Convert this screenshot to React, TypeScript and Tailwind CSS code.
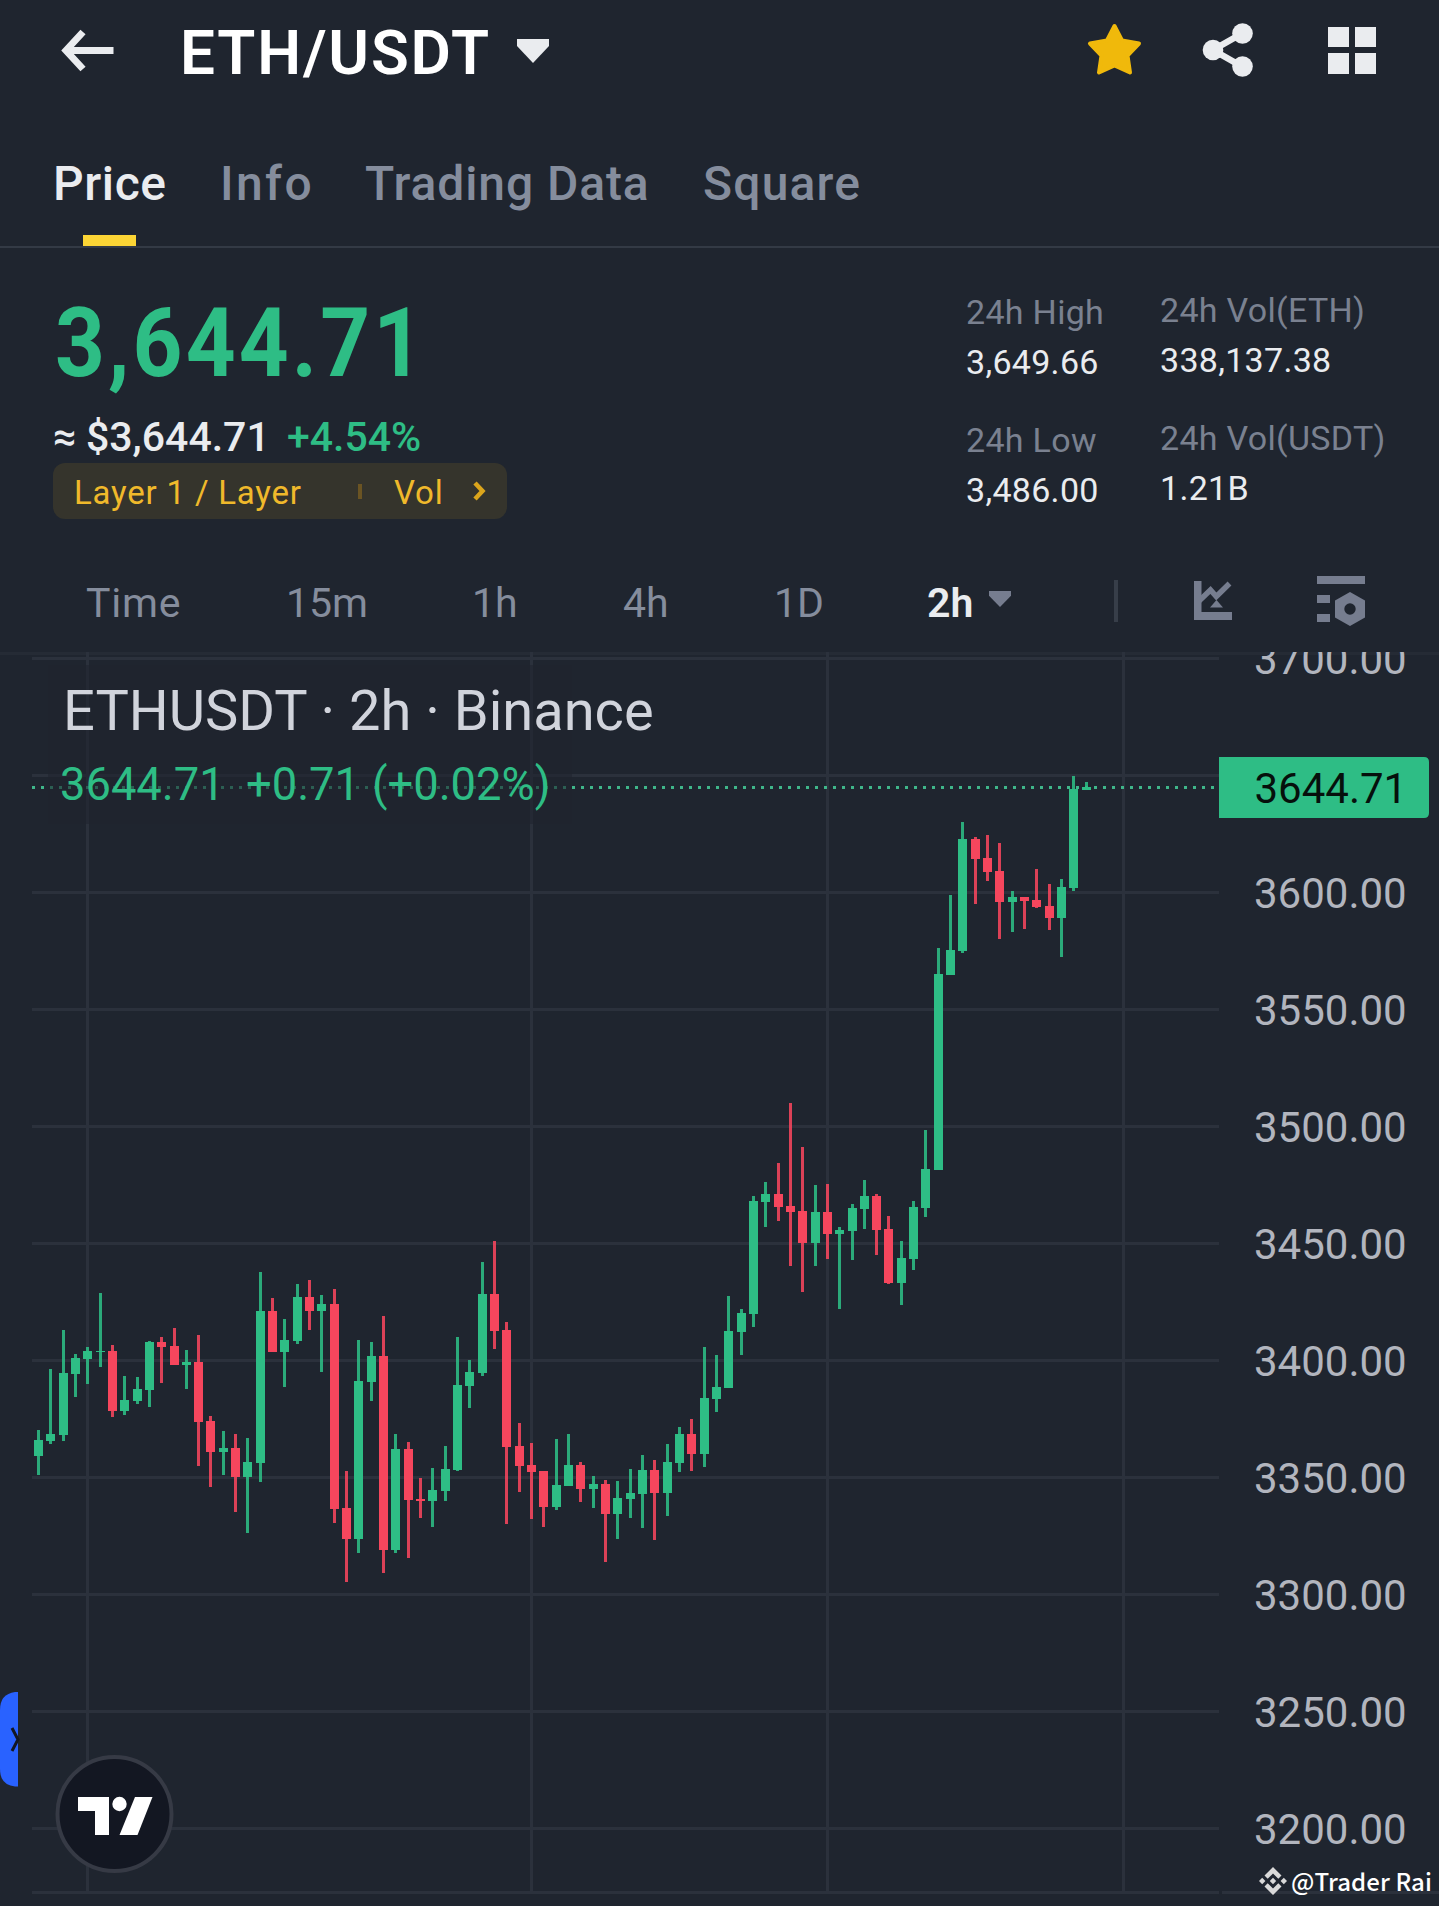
import React from "react"
import clsx from "clsx"

type Side = "up" | "down"
// side, wick top, body top, body bottom, wick bottom
type Candle = [Side, number, number, number, number]

const candles: Candle[] = [
  ["up", 1430, 1440, 1456, 1475],
  ["up", 1369, 1434, 1441, 1444],
  ["up", 1330, 1373, 1435, 1441],
  ["up", 1354, 1358, 1374, 1397],
  ["up", 1347, 1351, 1359, 1384],
  ["up", 1293, 1351, 1352, 1367],
  ["down", 1345, 1351, 1411, 1417],
  ["up", 1376, 1400, 1411, 1415],
  ["up", 1377, 1389, 1401, 1404],
  ["up", 1341, 1342, 1390, 1407],
  ["down", 1337, 1342, 1347, 1383],
  ["down", 1328, 1346, 1365, 1365],
  ["up", 1350, 1362, 1365, 1389],
  ["down", 1335, 1362, 1422, 1466],
  ["down", 1416, 1421, 1452, 1487],
  ["up", 1431, 1448, 1452, 1475],
  ["down", 1434, 1448, 1477, 1512],
  ["up", 1438, 1462, 1477, 1533],
  ["up", 1272, 1311, 1463, 1482],
  ["down", 1298, 1311, 1352, 1352],
  ["up", 1319, 1340, 1352, 1387],
  ["up", 1284, 1297, 1341, 1344],
  ["down", 1280, 1297, 1311, 1330],
  ["up", 1295, 1304, 1311, 1372],
  ["down", 1289, 1304, 1509, 1523],
  ["down", 1471, 1508, 1539, 1582],
  ["up", 1340, 1381, 1539, 1553],
  ["up", 1342, 1356, 1382, 1401],
  ["down", 1316, 1356, 1550, 1573],
  ["up", 1434, 1449, 1550, 1553],
  ["down", 1442, 1449, 1500, 1558],
  ["down", 1478, 1499, 1501, 1518],
  ["up", 1468, 1490, 1501, 1527],
  ["up", 1446, 1469, 1491, 1501],
  ["up", 1337, 1385, 1470, 1471],
  ["up", 1360, 1372, 1386, 1408],
  ["up", 1262, 1294, 1373, 1376],
  ["down", 1241, 1294, 1331, 1349],
  ["down", 1322, 1330, 1447, 1524],
  ["down", 1423, 1446, 1466, 1492],
  ["down", 1443, 1465, 1472, 1519],
  ["down", 1471, 1471, 1507, 1527],
  ["up", 1439, 1485, 1507, 1510],
  ["up", 1434, 1465, 1486, 1486],
  ["down", 1462, 1465, 1489, 1502],
  ["up", 1476, 1484, 1489, 1508],
  ["down", 1480, 1484, 1514, 1562],
  ["up", 1481, 1498, 1514, 1539],
  ["up", 1469, 1493, 1499, 1518],
  ["up", 1455, 1470, 1494, 1528],
  ["down", 1460, 1470, 1493, 1540],
  ["up", 1444, 1462, 1493, 1516],
  ["up", 1427, 1434, 1463, 1472],
  ["down", 1419, 1434, 1454, 1471],
  ["up", 1347, 1398, 1454, 1467],
  ["up", 1355, 1387, 1399, 1412],
  ["up", 1296, 1331, 1388, 1388],
  ["up", 1309, 1313, 1332, 1355],
  ["up", 1196, 1201, 1314, 1327],
  ["up", 1182, 1194, 1202, 1227],
  ["down", 1163, 1194, 1207, 1221],
  ["down", 1103, 1206, 1212, 1266],
  ["down", 1147, 1211, 1243, 1292],
  ["up", 1185, 1212, 1243, 1266],
  ["down", 1184, 1212, 1234, 1259],
  ["up", 1227, 1230, 1234, 1309],
  ["up", 1204, 1208, 1231, 1260],
  ["up", 1180, 1196, 1209, 1229],
  ["down", 1194, 1196, 1230, 1255],
  ["down", 1216, 1229, 1283, 1284],
  ["up", 1241, 1258, 1283, 1305],
  ["up", 1201, 1207, 1259, 1270],
  ["up", 1130, 1169, 1208, 1217],
  ["up", 948, 974, 1170, 1170],
  ["up", 895, 950, 975, 975],
  ["up", 822, 839, 951, 953],
  ["down", 837, 839, 859, 904],
  ["down", 835, 858, 872, 881],
  ["down", 843, 871, 902, 939],
  ["up", 891, 897, 902, 932],
  ["down", 897, 897, 901, 929],
  ["down", 869, 900, 907, 908],
  ["down", 884, 906, 918, 930],
  ["up", 879, 887, 918, 957],
  ["up", 776, 789, 888, 891],
  ["up", 782, 787, 790, 790],
]

const prices = [3700, 3650, 3600, 3550, 3500, 3450, 3400, 3350, 3300, 3250, 3200]
const verticals = [86, 530, 826, 1122]

const tabs = [
  { label: "Price", className: "ml-[53px] w-[113px] tracking-[0.6px]", active: true },
  { label: "Info", className: "ml-[54px] w-[94px] tracking-[2.4px]" },
  { label: "Trading Data", className: "ml-[51px] w-[284px] tracking-[0.9px]" },
  { label: "Square", className: "ml-[54px] w-[162px] tracking-[1.2px]" },
]

const intervals = [
  { label: "Time", className: "ml-[86px] w-[200px] tracking-[0.8px]" },
  { label: "15m", className: "w-[186px]" },
  { label: "1h", className: "w-[151px]" },
  { label: "4h", className: "w-[151px]" },
  { label: "1D", className: "w-[153px]" },
]

function BackIcon() {
  return (
    <svg className="ml-[60px] h-[44px] w-[56px] shrink-0" viewBox="0 0 56 44" fill="none">
      <path d="M23 4 L6 22.5 L23 41 M6 22.5 H53.5" stroke="#eaecef" strokeWidth="7" />
    </svg>
  )
}

function StarIcon() {
  return (
    <svg className="mb-[2px] h-[56px] w-[56px]" viewBox="0 0 56 56">
      <path
        d="M27.5 5 L35 19.5 L52 22.5 L40.5 34.5 L43 51.500 L27.5 44.5 L12 51.500 L14.5 34.500 L3 22.5 L20 19.5 Z"
        fill="#f0b90b"
        stroke="#f0b90b"
        strokeWidth="4"
        strokeLinejoin="round"
      />
    </svg>
  )
}

function ShareIcon() {
  return (
    <svg className="h-[56px] w-[52px]" viewBox="0 0 52 56" fill="#eaecef">
      <path d="M41 11.5 L12 28 L41 44.5" fill="none" stroke="#eaecef" strokeWidth="6.5" />
      <circle cx="12" cy="28" r="10.3" />
      <circle cx="41.5" cy="11.5" r="10.3" />
      <circle cx="41.5" cy="44.5" r="10.3" />
    </svg>
  )
}

function GridIcon() {
  return (
    <div className="grid h-[47px] w-[48px] grid-cols-2 gap-[6px]">
      <span className="bg-[#eaecef]" />
      <span className="bg-[#eaecef]" />
      <span className="bg-[#eaecef]" />
      <span className="bg-[#eaecef]" />
    </div>
  )
}

function Caret({ className }: { className?: string }) {
  return (
    <svg className={className} viewBox="0 0 32 24" preserveAspectRatio="none">
      <path d="M0 0 H32 V7 L16 24 L0 7 Z" fill="currentColor" />
    </svg>
  )
}

function Header() {
  return (
    <header className="flex h-[100px] items-center">
      <BackIcon />
      <h1 className="ml-[64px] w-[320px] pt-[6px] text-[62px] leading-none font-semibold tracking-[1.8px] text-white">
        ETH/USDT
      </h1>
      <Caret className="mt-[2px] ml-[17px] h-[24px] w-[32px] text-[#eaecef]" />
      <div className="ml-auto flex items-center pr-[63px]">
        <StarIcon />
        <div className="ml-[58px]">
          <ShareIcon />
        </div>
        <div className="ml-[75px]">
          <GridIcon />
        </div>
      </div>
    </header>
  )
}

function Tabs() {
  return (
    <nav className="flex h-[148px] border-b-2 border-[#333a45] pt-[56px]">
      {tabs.map((tab) => (
        <div
          key={tab.label}
          className={clsx(
            "flex flex-col justify-between text-[48px] leading-[56px] font-medium whitespace-nowrap",
            tab.active ? "text-[#eaecef]" : "text-[#858d9d]",
            tab.className
          )}
        >
          {tab.label}
          {tab.active && <span className="ml-[30px] h-[11px] w-[53px] bg-[#fcd535]" />}
        </div>
      ))}
    </nav>
  )
}

function Stat({ label, value }: { label: string; value: string }) {
  return (
    <div className="text-[34px] leading-[50px] tracking-[0.3px] whitespace-nowrap">
      <div className="text-[#7a8190]">{label}</div>
      <div className="text-[#eaecef]">{value}</div>
    </div>
  )
}

function Summary() {
  return (
    <section className="flex h-[305px]">
      <div className="w-[966px] shrink-0 pt-[50px] pl-[53px]">
        <div className="ml-[2px] origin-left scale-x-[0.897] text-[97px] leading-[90px] font-bold tracking-[3.5px] text-[#2ebd85]">
          3,644.71
        </div>
        <div className="mt-[25px] flex text-[41px] leading-[48px] font-medium">
          <span className="w-[33px] text-[#eaecef]">≈</span>
          <span className="w-[201px] text-[#eaecef]">$3,644.71</span>
          <span className="text-[#2ebd85]">+4.54%</span>
        </div>
        <div className="mt-0.5 flex h-[56px] w-[454px] items-center rounded-xl bg-[#35342c] pl-[21px] text-[33px] tracking-[0.8px] text-[#f0b92b]">
          <span className="w-[284px] pt-[3px]">Layer 1 / Layer</span>
          <span className="h-[15px] w-[4px] bg-[#6b5423]" />
          <span className="ml-[32px] w-[78px] pt-[3px]">Vol</span>
          <svg className="h-[20px] w-[14px]" viewBox="0 0 14 20" fill="none">
            <path d="M3 2 L10.5 10 L3 18" stroke="#dba51c" strokeWidth="4.5" />
          </svg>
        </div>
      </div>
      <div className="flex w-[194px] shrink-0 flex-col gap-[28px] pt-[39px]">
        <Stat label="24h High" value="3,649.66" />
        <Stat label="24h Low" value="3,486.00" />
      </div>
      <div className="flex flex-col gap-[28px] pt-[37px]">
        <Stat label="24h Vol(ETH)" value="338,137.38" />
        <Stat label="24h Vol(USDT)" value="1.21B" />
      </div>
    </section>
  )
}

function IntervalBar() {
  return (
    <div className="flex h-[99px] items-center pt-px text-[41px] leading-none text-[#858d9d]">
      {intervals.map((item) => (
        <span key={item.label} className={item.className}>
          {item.label}
        </span>
      ))}
      <span className="w-[62px] font-semibold text-[#eaecef]">2h</span>
      <Caret className="mb-[9px] h-[16px] w-[22px] text-[#767d8f]" />
      <span className="mb-[5px] ml-[103px] h-[42px] w-[4px] bg-[#373e49]" />
      <svg className="mb-[6px] ml-[76px] h-[39px] w-[39px]" viewBox="0 0 39 39" fill="#767d8f">
        <path d="M0 0 H7.5 V31 H38 V39 H0 Z" />
        <path d="M5 20 L16.5 9 L22.3 15.5 L35.5 2.5" fill="none" stroke="#767d8f" strokeWidth="5.5" />
        <path d="M16 26.5 L22.5 19 L29 26.5 Z" />
      </svg>
      <svg className="mb-[5px] ml-[84px] h-[50px] w-[48px]" viewBox="0 0 48 50" fill="#767d8f">
        <path d="M0 0 H48 V8 H0 Z M0 19 H13 V27 H0 Z M0 38 H13 V46 H0 Z" />
        <path
          fillRule="evenodd"
          d="M33 16 L48 24.5 V41.5 L33 50 L18 41.5 V24.5 Z M33 27.3 A5.7 5.7 0 1 0 33 38.7 A5.7 5.7 0 1 0 33 27.3 Z"
        />
      </svg>
    </div>
  )
}

function PlotGrid() {
  return (
    <g fill="#2b313c">
      <rect x="0" y="652" width="1439" height="3" fill="#252b35" />
      {prices.map((price, i) => (
        <rect key={price} x="32" y={657 + i * 117} width="1187" height="3" />
      ))}
      {verticals.map((x) => (
        <rect key={x} x={x} y="652" width="3" height="1240" />
      ))}
      <rect x="32" y="1891" width="1187" height="3" />
      <rect x="1222" y="1891" width="217" height="3" />
    </g>
  )
}

function Candles() {
  return (
    <>
      {candles.map(([side, high, top, bottom, low], i) => {
        const x = Math.floor(38.42 + i * 12.327)
        return (
          <g key={i} fill={side === "up" ? "#2ebd85" : "#f6465d"}>
            <rect x={x - 1} y={high} width="3" height={low - high} opacity="0.88" />
            <rect x={x - 4} y={top} width="9" height={bottom - top} />
          </g>
        )
      })}
    </>
  )
}

function TradingViewMark() {
  return (
    <g>
      <circle cx="114.5" cy="1814" r="57" fill="#131722" stroke="#363a45" strokeWidth="4" />
      <g fill="#ffffff">
        <path d="M78 1797 H109 V1835 H95 V1811 H78 Z" />
        <circle cx="119.5" cy="1804" r="7.2" />
        <path d="M135 1797 H152.5 L137.5 1835 H119.5 Z" />
      </g>
    </g>
  )
}

function Chart() {
  return (
    <section className="relative h-[1254px] overflow-hidden">
      <svg className="block h-[1254px] w-[1439px]" viewBox="0 652 1439 1254">
        <PlotGrid />
        <line x1="32" x2="1219" y1="787.5" y2="787.5" stroke="#3fb68a" strokeWidth="3" strokeDasharray="3 6" />
        <Candles />
        <g fontSize="42" fill="#b2b5be">
          {prices
            .filter((price) => price !== 3650)
            .map((price) => (
              <text key={price} x="1254" y={674 + ((3700 - price) / 50) * 117}>
                {price.toFixed(2)}
              </text>
            ))}
        </g>
        <path d="M1219 757 H1424 Q1429 757 1429 762 V813 Q1429 818 1424 818 H1219 Z" fill="#2ebd85" />
        <text x="1254.5" y="803" fontSize="42" fill="#06100c">
          3644.71
        </text>
        <TradingViewMark />
        <path d="M18 1692 H15 Q0 1694 0 1710 V1769 Q0 1785 15 1786.5 H18 Z" fill="#2962ff" />
        <path d="M12 1728 L18 1739.5 L12 1751" fill="none" stroke="#131722" strokeWidth="3" />
      </svg>

      {/* Legend sits on a translucent plate so the grid fades under it */}
      <div className="absolute top-[13px] left-[48px] h-[159px] w-[524px] bg-[#1f252f]/60" />
      <div className="absolute top-[25px] left-[63px] text-[56px] leading-[68px] whitespace-nowrap text-[#d1d4dc]">
        ETHUSDT · 2h · Binance
      </div>
      <div className="absolute top-[107px] left-[60px] flex text-[45.3px] leading-[52px] whitespace-nowrap text-[#2ebd85]">
        <span className="w-[186px]">3644.71</span>
        <span className="w-[126px]">+0.71</span>
        <span>(+0.02%)</span>
      </div>

      <div className="absolute right-[7px] bottom-[7px] flex items-center font-['Noto_Sans_CJK_SC','Noto_Sans',sans-serif] text-[24px] leading-[36px] font-medium tracking-[0.1px] whitespace-nowrap text-white">
        <svg className="mr-[4px] h-[28px] w-[28px]" viewBox="0 0 28 28" fill="#d9d9d9">
          <path d="M14 0 L22.5 8.5 L19.3 11.7 L14 6.4 L8.7 11.7 L5.5 8.5 Z" />
          <path d="M14 28 L22.5 19.5 L19.3 16.3 L14 21.6 L8.7 16.3 L5.5 19.5 Z" />
          <path d="M14 10.8 L17.2 14 L14 17.2 L10.8 14 Z" />
          <path d="M3.2 10.8 L6.4 14 L3.2 17.2 L0 14 Z" />
          <path d="M24.8 10.8 L28 14 L24.8 17.2 L21.6 14 Z" />
        </svg>
        @Trader Rai
      </div>
    </section>
  )
}

export default function App() {
  return (
    <main className="h-[1906px] w-[1439px] overflow-hidden bg-[#1f252f] font-[Roboto,sans-serif]">
      <Header />
      <Tabs />
      <Summary />
      <IntervalBar />
      <Chart />
    </main>
  )
}
